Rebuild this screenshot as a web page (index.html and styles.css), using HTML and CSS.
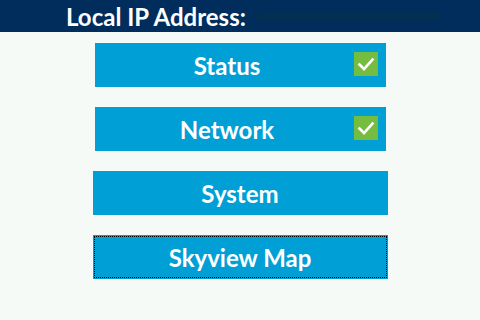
FILE: index.html
```html
<!DOCTYPE html>
<html lang="en">
<head>
    <meta charset="UTF-8">
    <meta name="viewport" content="width=device-width, initial-scale=1.0">
    <title>Main Menu</title>
    <link rel="stylesheet" href="styles.css">
</head>
<body>
    <div class="header">
        <span class="ip-label">Local IP Address:</span>
        <span class="ip-value"></span>
    </div>
    <div class="menu">
        <button class="menu-btn narrow">
            <span class="label">Status</span>
            <span class="check">
                <svg width="24" height="24" viewBox="0 0 24 24"><path d="M5.5 12.5 L10 17 L18.5 7.5" fill="none" stroke="#fff" stroke-width="2.6" stroke-linecap="square"/></svg>
            </span>
        </button>
        <button class="menu-btn narrow">
            <span class="label">Network</span>
            <span class="check">
                <svg width="24" height="24" viewBox="0 0 24 24"><path d="M5.5 12.5 L10 17 L18.5 7.5" fill="none" stroke="#fff" stroke-width="2.6" stroke-linecap="square"/></svg>
            </span>
        </button>
        <button class="menu-btn wide">System</button>
        <button class="menu-btn wide focused">Skyview Map</button>
    </div>
</body>
</html>
```

FILE: styles.css
```css
body {
    margin: 0;
    background-color: #f5faf7;
    font-family: Lato, "Open Sans", sans-serif;
    width: 480px;
    height: 320px;
    overflow: hidden;
}
.header {
    height: 32px;
    background-color: #002d5b;
    color: white;
    display: flex;
    align-items: center;
    padding-left: 66px;
}
.ip-label {
    font-size: 24px;
    font-weight: bold;
}
.ip-value {
    margin-left: 11px;
    width: 183px;
    height: 5px;
    background-color: #04304f;
}
.menu {
    display: flex;
    flex-direction: column;
    align-items: center;
    gap: 20px;
    margin-top: 11px;
}
.menu-btn {
    height: 44px;
    border: none;
    margin: 0;
    padding: 0;
    background-color: #009fd6;
    color: white;
    font-family: inherit;
    font-size: 24px;
    font-weight: bold;
    display: flex;
    align-items: center;
    justify-content: center;
}
.narrow {
    width: 291px;
    padding-right: 26px;
    position: relative;
}
.wide {
    width: 295px;
}
.check {
    position: absolute;
    right: 8px;
    top: 9px;
    width: 24px;
    height: 24px;
    background-color: #75bd3f;
}
.check svg {
    display: block;
}
.focused {
    outline: 1px dotted #000;
    outline-offset: -2px;
}
```
